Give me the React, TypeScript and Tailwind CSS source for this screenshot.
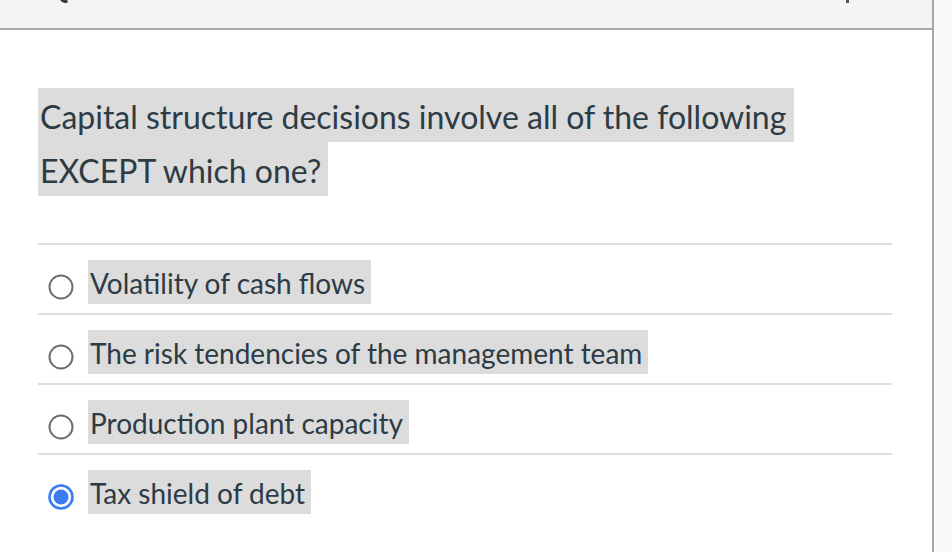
import React from "react";

const options = [
  { text: "Volatility of cash flows", selected: false },
  { text: "The risk tendencies of the management team", selected: false },
  { text: "Production plant capacity", selected: false },
  { text: "Tax shield of debt", selected: true },
];

function Radio({ selected }: { selected: boolean }) {
  if (selected) {
    return (
      <svg width="26" height="26" viewBox="0 0 26 26" className="shrink-0">
        <circle cx="13" cy="13" r="11.5" fill="white" stroke="#3b7bf4" strokeWidth="2.6" />
        <circle cx="13" cy="13" r="7.5" fill="#3b7bf4" />
      </svg>
    );
  }
  return (
    <svg width="26" height="26" viewBox="0 0 26 26" className="shrink-0">
      <circle cx="13" cy="13" r="11.5" fill="white" stroke="#6f6f6f" strokeWidth="2" />
    </svg>
  );
}

export default function App() {
  return (
    <div
      className="flex w-[952px] h-[552px] overflow-hidden bg-white text-[#2d3b45]"
      style={{ fontFamily: "Lato, 'Noto Sans', sans-serif" }}
    >
      <div className="flex flex-col w-[934px] h-full border-r-2 border-[#a7a7a7]">
        <div className="h-[30px] shrink-0 bg-[#f4f4f4] border-b-2 border-[#aaaaaa] relative">
          <div className="absolute left-[61px] top-0 w-[7px] h-[3px] bg-[#2d3b45] rounded-b-sm skew-x-[30deg]" />
          <div className="absolute left-[846px] top-0 w-[3px] h-[3px] bg-[#555]" />
        </div>
        <div className="pl-[38px] pt-[58px]">
          <div className="text-[32px]">
            <div className="h-[54px]">
              <span className="inline-block bg-[#dcdcdc] h-[54px] leading-[58px] pl-[2px] pr-[8px]">
                Capital structure decisions involve all of the following
              </span>
            </div>
            <div className="h-[54px]">
              <span className="inline-block bg-[#dcdcdc] h-[54px] leading-[58px] pl-[2px] pr-[7px]">
                EXCEPT which one?
              </span>
            </div>
          </div>
          <div className="mt-[47px] w-[854px]">
            {options.map((o) => (
              <div
                key={o.text}
                className="flex items-start border-t-2 border-[#dedede] pt-[15px] pb-[9px] h-[70px]"
              >
                <div className="pl-[10px] pt-[14px] w-[50px]">
                  <Radio selected={o.selected} />
                </div>
                <span className="inline-block bg-[#dcdcdc] h-[44px] leading-[46px] text-[28px] pl-[2px] pr-[6px]">
                  {o.text}
                </span>
              </div>
            ))}
          </div>
        </div>
      </div>
      <div className="flex-1 h-full bg-[#fafafa]" />
    </div>
  );
}
